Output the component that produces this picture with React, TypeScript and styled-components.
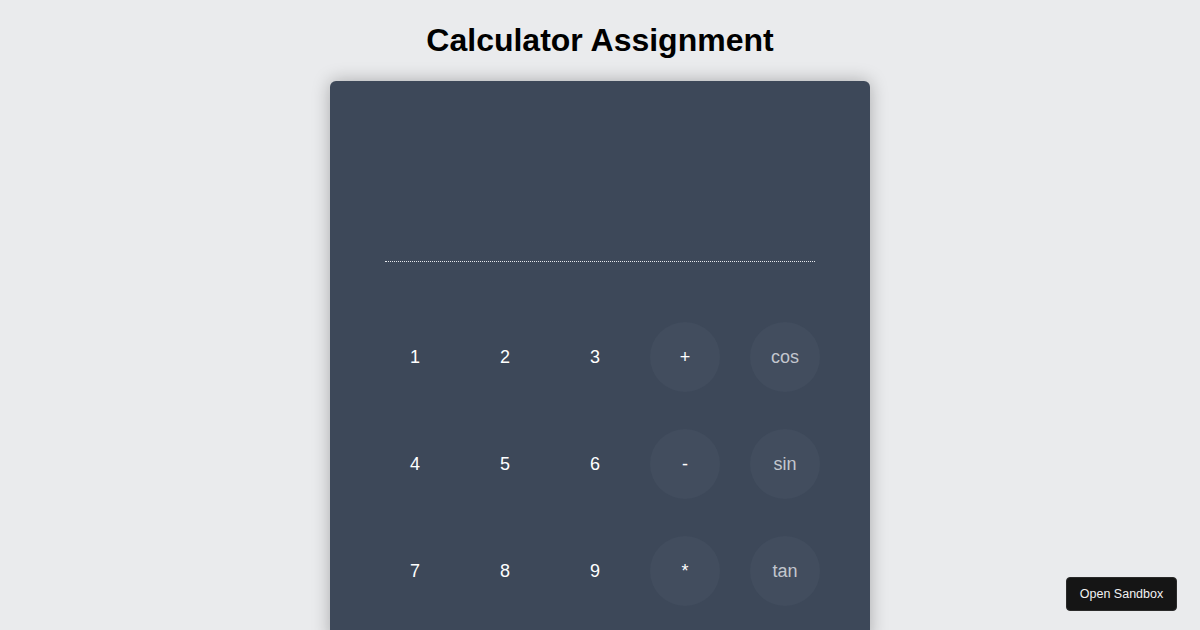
import React from "react";
import styled, { createGlobalStyle } from "styled-components";

const GlobalStyle = createGlobalStyle`
  html, body {
    margin: 0;
    padding: 0;
    background: #eaebed;
    font-family: "Liberation Sans", Arial, sans-serif;
    overflow: hidden;
  }
`;

const Page = styled.div`
  display: flex;
  flex-direction: column;
  align-items: center;
  height: 630px;
  overflow: hidden;
`;

const Title = styled.h1`
  margin: 22px 0;
  font-size: 32px;
  line-height: 37px;
  font-weight: 700;
  color: #000;
`;

const Card = styled.div`
  width: 540px;
  height: 560px;
  flex-shrink: 0;
  background: #3d4859;
  border-radius: 6px;
  box-shadow: 0 0 18px rgba(0, 0, 0, 0.28);
  display: flex;
  flex-direction: column;
`;

const Display = styled.div`
  margin: 0 55px;
  height: 180px;
  border-bottom: 1px dotted #e6e8ec;
`;

const Keypad = styled.div`
  padding: 60px 50px 0;
  display: flex;
  flex-direction: column;
  gap: 37px;
`;

const Row = styled.div`
  display: flex;
  gap: 20px;
`;

const Key = styled.button<{ $kind: "digit" | "op" | "fn" }>`
  width: 70px;
  height: 70px;
  border: none;
  border-radius: 50%;
  padding: 0;
  margin-left: ${(p) => (p.$kind === "fn" ? "10px" : "0")};
  background: ${(p) => (p.$kind === "digit" ? "transparent" : "#424d5e")};
  color: ${(p) => (p.$kind === "fn" ? "#c3c7ce" : "#ffffff")};
  font-family: "Liberation Sans", Arial, sans-serif;
  font-size: 18px;
  display: flex;
  align-items: center;
  justify-content: center;
  cursor: pointer;
`;

const SandboxButton = styled.a`
  position: fixed;
  right: 23px;
  bottom: 19px;
  width: 111px;
  height: 34px;
  box-sizing: border-box;
  background: #151515;
  color: #f2f2f2;
  border-radius: 4px;
  border: 1px solid #2a2a2a;
  font-family: "Liberation Sans", Arial, sans-serif;
  font-size: 12.5px;
  display: flex;
  align-items: center;
  justify-content: center;
  text-decoration: none;
`;

const rows: { label: string; kind: "digit" | "op" | "fn" }[][] = [
  [
    { label: "1", kind: "digit" },
    { label: "2", kind: "digit" },
    { label: "3", kind: "digit" },
    { label: "+", kind: "op" },
    { label: "cos", kind: "fn" },
  ],
  [
    { label: "4", kind: "digit" },
    { label: "5", kind: "digit" },
    { label: "6", kind: "digit" },
    { label: "-", kind: "op" },
    { label: "sin", kind: "fn" },
  ],
  [
    { label: "7", kind: "digit" },
    { label: "8", kind: "digit" },
    { label: "9", kind: "digit" },
    { label: "*", kind: "op" },
    { label: "tan", kind: "fn" },
  ],
];

export default function App() {
  return (
    <>
      <GlobalStyle />
      <Page>
        <Title>Calculator Assignment</Title>
        <Card>
          <Display />
          <Keypad>
            {rows.map((row, i) => (
              <Row key={i}>
                {row.map((k) => (
                  <Key key={k.label} $kind={k.kind}>
                    {k.label}
                  </Key>
                ))}
              </Row>
            ))}
          </Keypad>
        </Card>
      </Page>
      <SandboxButton href="#">Open Sandbox</SandboxButton>
    </>
  );
}
